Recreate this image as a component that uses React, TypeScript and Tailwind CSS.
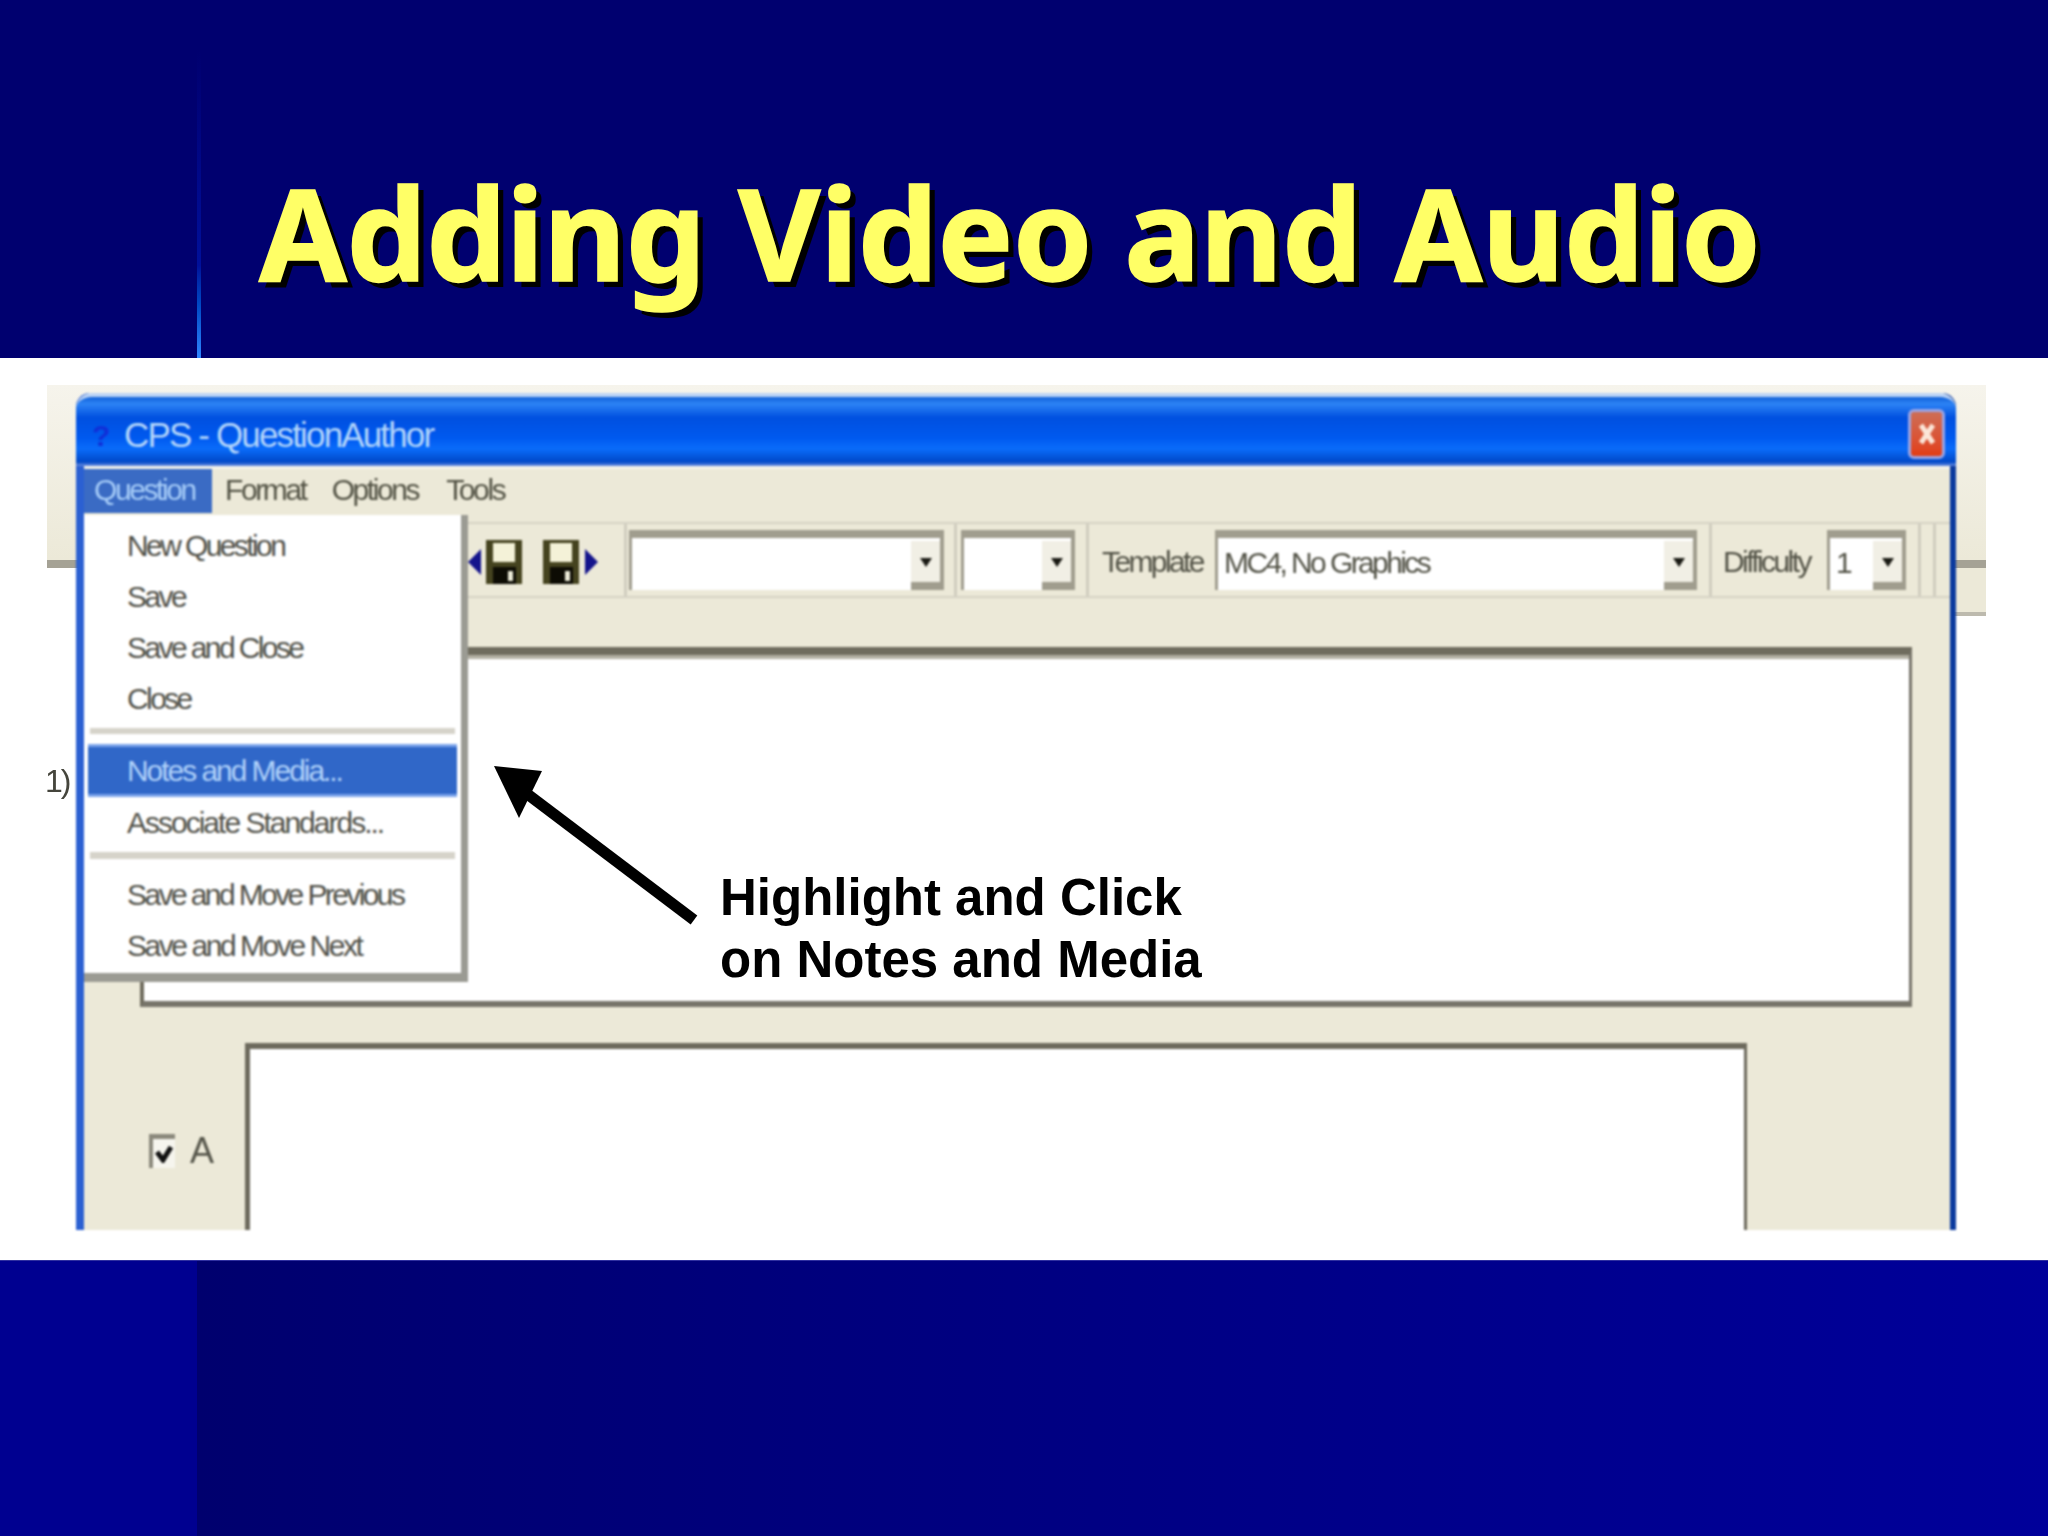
const uiFont = "font-['Liberation_Sans',Arial,sans-serif]";

function Floppy() {
  return (
    <svg width="36" height="44" viewBox="0 0 36 44">
      <rect width="36" height="44" fill="#45431f" />
      <rect x="7" y="3" width="22" height="19" fill="#f4f2d8" />
      <rect x="7" y="27" width="23" height="17" fill="#0d0c04" />
      <rect x="22" y="31" width="5" height="10" fill="#ecebd8" />
    </svg>
  );
}

function Combo({ width, text }: { width: string; text?: string }) {
  return (
    <div className={`${width} h-[60px] bg-white border-t-[8px] border-l-[3px] border-r-[4px] border-[#a09d8e] flex`}>
      <span className="flex-1 pl-[6px] pt-[7px] text-[30px] leading-[36px] tracking-[-2.6px] text-[#525246] whitespace-nowrap">{text}</span>
      <div className="w-[29px] mt-[3px] bg-[#f1efe5] border-b-[8px] border-[#a09d8e] flex items-center justify-center">
        <svg width="12" height="12" viewBox="0 0 12 12">
          <path d="M0 2h12L6 11z" fill="#1a1a14" />
        </svg>
      </div>
    </div>
  );
}

function ToolSep({ className }: { className: string }) {
  return <div className={`w-[3px] self-stretch bg-[#d0cdbf] ${className}`} />;
}

function MenuItem({ label, tracking = "tracking-[-2.6px]" }: { label: string; tracking?: string }) {
  return (
    <div className={`mx-[4px] h-[51px] pl-[39px] flex items-center text-[#505048] text-[30px] ${tracking}`}>
      {label}
    </div>
  );
}

export default function App() {
  return (
    <div className={`w-[2048px] h-[1536px] flex flex-col overflow-hidden ${uiFont}`}>
      <header className="relative h-[358px] bg-[#00006f] pl-[259px] pt-[157px]">
        <div className="absolute left-[197px] top-[50px] bottom-0 w-[4px] bg-gradient-to-b from-[#00006f] via-[#00109a] via-70% to-[#2f86ff]" />
        <h1 className="font-['Noto_Sans',sans-serif] font-bold text-[127px] leading-[150px] tracking-[-0.45px] text-[#ffff66] whitespace-nowrap [-webkit-text-stroke:1.5px_#ffff66] [text-shadow:6px_6px_0_#000]">
          Adding Video and Audio
        </h1>
      </header>

      <main className="relative h-[902px] bg-white pt-[35px] pl-[76px]">
        {/* strip of the desktop app behind the window */}
        <div className="absolute left-[47px] top-[27px] w-[1939px] h-[183px] bg-gradient-to-b from-[#f6f4ec] to-[#ece9d8] border-b-[8px] border-[#a5a295]" />
        <div className="absolute left-[1950px] top-[210px] w-[36px] h-[48px] bg-[#ece9d8] border-b-[4px] border-[#bdbaae]" />
        <span className="absolute left-[45px] top-[405px] text-[32px] leading-[36px] tracking-[-2px] text-[#45453c] blur-[0.7px]">1)</span>

        <div className="relative w-[1880px] h-[837px] bg-[#ece9d8] border-l-[8px] border-r-[6px] border-l-[#2b60d2] border-r-[#0b3a9e] rounded-t-[14px] flex flex-col blur-[0.8px]">
          <div className="-ml-[8px] -mr-[6px] h-[73px] rounded-t-[16px] border-t-[4px] border-[#bcd4f5] bg-[linear-gradient(#1261d8_0%,#2d83f5_10%,#0050e0_30%,#005af0_60%,#0a6cfa_75%,#0048c8_94%,#6e90e0_100%)] flex items-center pl-[16px] pr-[11px]">
            <span className="w-[32px] pt-[8px] font-bold text-[30px] text-[#1030d8]">?</span>
            <span className="flex-1 pt-[8px] text-[35px] tracking-[-1.85px] text-[#b4d6fb]">CPS - QuestionAuthor</span>
            <div className="mt-[4px] w-[37px] h-[50px] rounded-[6px] border-[3px] border-[#9aa4e4] bg-gradient-to-b from-[#cd6d55] to-[#e23c12] flex items-center justify-center">
              <svg width="18" height="24" viewBox="0 0 18 24">
                <path d="M3 3l12 18M15 3L3 21" stroke="#fbe6d8" strokeWidth="5" />
              </svg>
            </div>
          </div>

          <nav className="h-[47px] flex items-center border-t-[3px] border-[#f3f2ea] text-[30px] tracking-[-2.4px] text-[#525244]">
            <span className="h-full w-[128px] pl-[10px] pb-[3px] flex items-center bg-[#3a6bc4] text-[#a6ccf8]">Question</span>
            <span className="ml-[13px] pb-[3px]">Format</span>
            <span className="ml-[26px] pb-[3px]">Options</span>
            <span className="ml-[28px] pb-[3px]">Tools</span>
          </nav>

          <div className="mt-[9px] h-[76px] ml-[378px] flex items-center border-y-[2px] border-y-[#d5d2c4] text-[30px] tracking-[-2.6px] text-[#525246]">
            <svg className="ml-[6px] mt-[3px]" width="13" height="26" viewBox="0 0 13 26">
              <path d="M13 0v26L0 13z" fill="#14148c" />
            </svg>
            <div className="ml-[5px] mt-[3px]"><Floppy /></div>
            <div className="ml-[21px] mt-[3px]"><Floppy /></div>
            <svg className="ml-[6px] mt-[3px]" width="13" height="26" viewBox="0 0 13 26">
              <path d="M0 0v26l13-13z" fill="#14148c" />
            </svg>
            <ToolSep className="ml-[26px] mr-[2px]" />
            <Combo width="w-[315px]" />
            <ToolSep className="ml-[10px] mr-[4px]" />
            <Combo width="w-[114px]" />
            <ToolSep className="ml-[11px] mr-[13px]" />
            <span className="w-[113px] pt-[3px]">Template</span>
            <Combo width="w-[482px]" text="MC4, No Graphics" />
            <ToolSep className="ml-[12px] mr-[11px]" />
            <span className="w-[104px] pt-[3px]">Difficulty</span>
            <Combo width="w-[79px]" text="1" />
            <ToolSep className="ml-[12px] mr-[12px]" />
            <ToolSep className="" />
          </div>

          <div className="ml-[56px] mt-[49px] w-[1772px] h-[360px] shrink-0 bg-white border-t-[8px] border-l-[4px] border-r-[3px] border-b-[6px] border-t-[#6f6c5e] border-l-[#6f6c5e] border-r-[#77746a] border-b-[#77746a]">
            <div className="h-[4px] bg-[#b3b0a3]" />
          </div>

          <div className="mt-[36px] flex-1 min-h-0 flex overflow-hidden">
            <div className="ml-[65px] mt-[91px] w-[26px] h-[34px] self-start bg-[#f6f5ee] border-t-[5px] border-l-[4px] border-[#8b897c] flex items-center justify-center">
              <svg width="18" height="18" viewBox="0 0 18 18">
                <path d="M2 7l6 8 8-13" fill="none" stroke="#111" strokeWidth="5" />
              </svg>
            </div>
            <span className="ml-[15px] mt-[88px] self-start text-[36px] leading-[40px] text-[#55554a]">A</span>
            <div className="ml-[31px] w-[1502px] bg-white border-t-[6px] border-l-[5px] border-r-[3px] border-[#6d6a5d]" />
          </div>

          <div className="absolute left-0 top-[122px] w-[384px] h-[467px] bg-white border-r-[7px] border-b-[9px] border-[#9b9b93] pt-[5px] text-left">
            <MenuItem label="New Question" />
            <MenuItem label="Save" />
            <MenuItem label="Save and Close" />
            <MenuItem label="Close" />
            <div className="mx-[6px] mt-[4px] h-[6px] bg-[#d6d3ca]" />
            <div className="mt-[10px] mx-[4px] h-[53px] pl-[39px] flex items-center bg-[#3067c8] border-y-[3px] border-[#7ba3ea] text-[#b0d2fa] text-[30px] tracking-[-2.05px]">
              Notes and Media...
            </div>
            <MenuItem label="Associate Standards..." tracking="tracking-[-2px]" />
            <div className="mx-[6px] mt-[4px] h-[7px] bg-[#d6d3ca]" />
            <div className="mt-[10px]">
              <MenuItem label="Save and Move Previous" />
              <MenuItem label="Save and Move Next" tracking="tracking-[-2.45px]" />
            </div>
          </div>
        </div>

        <svg className="absolute left-[480px] top-[392px]" width="230" height="180" viewBox="0 0 230 180">
          <path d="M14 16L62 21L39 68z" fill="#000" />
          <path d="M42 40L214 170" stroke="#000" strokeWidth="11" />
        </svg>
        <div className="absolute left-[720px] top-[509px] font-bold text-[51px] leading-[62px] text-black">
          <p>Highlight and Click</p>
          <p>on Notes and Media</p>
        </div>
      </main>

      <footer className="h-[276px] flex border-t border-[#3030a0]">
        <div className="w-[197px] bg-[#000090]" />
        <div className="flex-1 bg-gradient-to-r from-[#00006e] to-[#00009a]" />
      </footer>
    </div>
  );
}
